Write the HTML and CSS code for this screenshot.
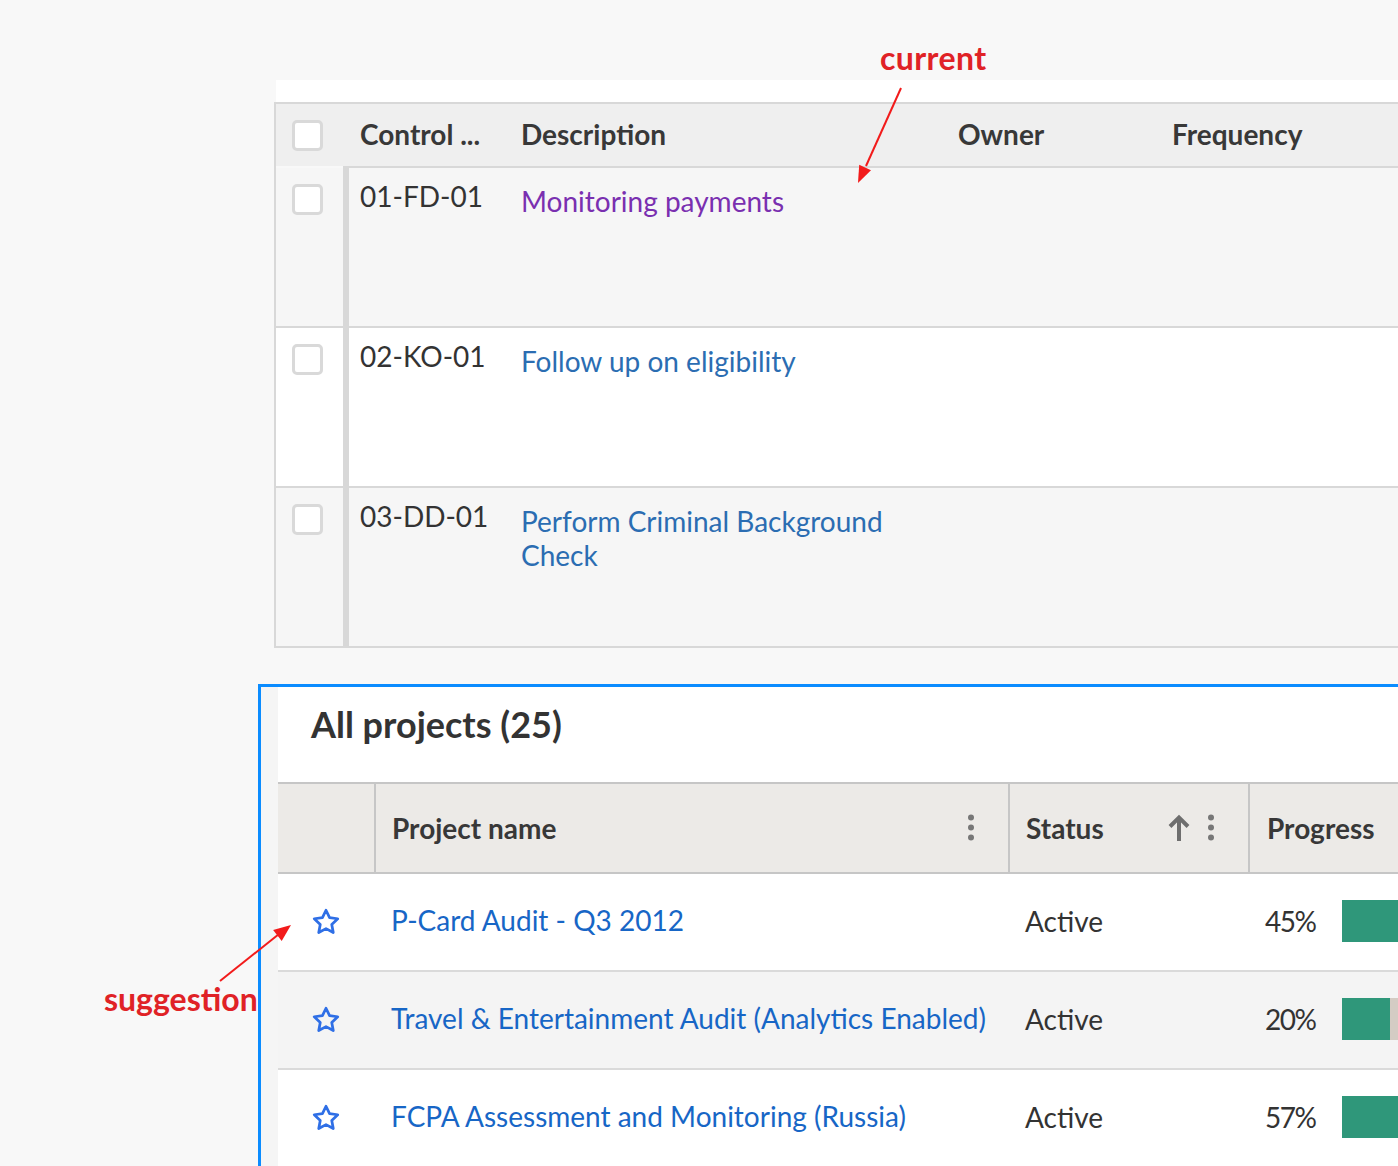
FILE: index.html
```html
<!DOCTYPE html>
<html lang="en">
<head>
<meta charset="utf-8">
<title>Controls and projects</title>
<link rel="stylesheet" href="styles.css">
</head>
<body>
<div class="page">
  <section class="controls">
    <div class="controls-top"></div>
    <div class="ctable">
      <div class="crow chead">
        <div class="cc cc-check"><span class="cb"></span></div>
        <div class="cc cc-id">Control ...</div>
        <div class="cc cc-desc">Description</div>
        <div class="cc cc-owner">Owner</div>
        <div class="cc cc-freq">Frequency</div>
      </div>
      <div class="crule"></div>
      <div class="cbody">
        <div class="crow alt">
          <div class="cc cc-check"><span class="cb"></span></div>
          <div class="cc cc-id">01-FD-01</div>
          <div class="cc cc-desc"><a class="clink visited" href="#">Monitoring payments</a></div>
          <div class="cc cc-owner"></div>
          <div class="cc cc-freq"></div>
        </div>
        <div class="crow">
          <div class="cc cc-check"><span class="cb"></span></div>
          <div class="cc cc-id">02-KO-01</div>
          <div class="cc cc-desc"><a class="clink" href="#">Follow up on eligibility</a></div>
          <div class="cc cc-owner"></div>
          <div class="cc cc-freq"></div>
        </div>
        <div class="crow alt">
          <div class="cc cc-check"><span class="cb"></span></div>
          <div class="cc cc-id">03-DD-01</div>
          <div class="cc cc-desc"><a class="clink" href="#">Perform Criminal Background Check</a></div>
          <div class="cc cc-owner"></div>
          <div class="cc cc-freq"></div>
        </div>
      </div>
    </div>
  </section>

  <section class="projects">
    <div class="pinner">
      <h2 class="ptitle">All projects (25)</h2>
      <div class="ptable">
        <div class="prow phead">
          <div class="pc pc-star"></div>
          <div class="pc pc-name"><span>Project name</span>
            <svg class="kebab" width="8" height="28" viewBox="0 0 8 28"><circle cx="4" cy="3.5" r="3"/><circle cx="4" cy="13.5" r="3"/><circle cx="4" cy="23.5" r="3"/></svg>
          </div>
          <div class="pc pc-status"><span>Status</span>
            <span class="hicons">
              <svg class="sortup" width="22" height="28" viewBox="0 0 22 28"><path d="M11 27V4M2 12.5L11 3.5l9 9"/></svg>
              <svg class="kebab" width="8" height="28" viewBox="0 0 8 28"><circle cx="4" cy="3.5" r="3"/><circle cx="4" cy="13.5" r="3"/><circle cx="4" cy="23.5" r="3"/></svg>
            </span>
          </div>
          <div class="pc pc-progress"><span>Progress</span></div>
        </div>
        <div class="pbody">
          <div class="prow">
            <div class="pc pc-star"><svg class="star" width="30" height="30" viewBox="0 0 24 24"><path d="M12 2.6l2.85 5.95 6.55.85-4.8 4.55 1.2 6.5L12 17.3l-5.8 3.150 1.2-6.5L2.6 9.4l6.55-.85z"/></svg></div>
            <div class="pc pc-name"><a class="plink" href="#">P-Card Audit - Q3 2012</a></div>
            <div class="pc pc-status"><span class="status">Active</span></div>
            <div class="pc pc-progress"><span class="pct">45%</span><span class="bar"><span class="fill" style="width:45%"></span></span></div>
          </div>
          <div class="prow alt">
            <div class="pc pc-star"><svg class="star" width="30" height="30" viewBox="0 0 24 24"><path d="M12 2.6l2.85 5.95 6.55.85-4.8 4.55 1.2 6.5L12 17.3l-5.8 3.15 1.2-6.5L2.6 9.4l6.55-.85z"/></svg></div>
            <div class="pc pc-name"><a class="plink" href="#">Travel &amp; Entertainment Audit (Analytics Enabled)</a></div>
            <div class="pc pc-status"><span class="status">Active</span></div>
            <div class="pc pc-progress"><span class="pct">20%</span><span class="bar"><span class="fill" style="width:20%"></span></span></div>
          </div>
          <div class="prow">
            <div class="pc pc-star"><svg class="star" width="30" height="30" viewBox="0 0 24 24"><path d="M12 2.6l2.85 5.95 6.55.85-4.8 4.55 1.2 6.5L12 17.3l-5.8 3.15 1.2-6.5L2.6 9.4l6.55-.85z"/></svg></div>
            <div class="pc pc-name"><a class="plink" href="#">FCPA Assessment and Monitoring (Russia)</a></div>
            <div class="pc pc-status"><span class="status">Active</span></div>
            <div class="pc pc-progress"><span class="pct">57%</span><span class="bar"><span class="fill" style="width:57%"></span></span></div>
          </div>
        </div>
      </div>
    </div>
  </section>
</div>

<svg class="annot" width="1398" height="1166" viewBox="0 0 1398 1166">
  <line x1="901" y1="88" x2="866" y2="166"/>
  <polygon points="858,183 859.2,164.8 871,170.2"/>
  <line x1="220" y1="981" x2="279" y2="934"/>
  <polygon points="291,925 273.1,930.1 281.7,941.1"/>
</svg>
<div class="note note-current">current</div>
<div class="note note-suggestion">suggestion</div>
</body>
</html>
```

FILE: styles.css
```css
html, body {
  margin: 0;
  padding: 0;
  overflow: hidden;
}
body {
  width: 1398px;
  height: 1166px;
  position: relative;
  background: #f8f8f8;
  font-family: Lato, "Noto Sans", "Liberation Sans", sans-serif;
  color: #333333;
}
.page {
  padding-top: 80px;
}

/* ---------- Controls table (current) ---------- */
.controls {
  margin-left: 274px;
  width: 1300px;
}
.controls-top {
  margin-left: 2px;
  height: 22px;
  background: #ffffff;
}
.ctable {
  border-top: 2px solid #d8d8d8;
  border-left: 2px solid #d8d8d8;
  border-bottom: 2px solid #d8d8d8;
}
.crow {
  display: grid;
  grid-template-columns: 67px 178px 437px 214px 1fr;
}
.cc {
  box-sizing: border-box;
  font-size: 28px;
  line-height: 34px;
}
.chead {
  height: 62px;
  background: #efefef;
  align-items: center;
}
.chead .cc {
  font-weight: 700;
  color: #383838;
  padding-bottom: 3px;
}
.chead .cc-check {
  padding-bottom: 0;
}
.cc-check {
  padding-left: 16px;
  display: flex;
}
.cc-id {
  padding-left: 17px;
}
.cc-desc {
  padding-left: 0;
}
.crule {
  height: 2px;
  margin-left: 67px;
  background: #d8d8d8;
}
.cbody .crow {
  height: 158px;
  background: #ffffff;
}
.cbody .crow.alt {
  background: #f6f6f6;
}
.cbody .crow:not(:last-child) {
  border-bottom: 2px solid #d8d8d8;
}
.cbody .cc-check {
  padding-top: 16px;
  align-items: flex-start;
}
.cbody .cc-id {
  border-left: 6px solid #d8d8d8;
  padding-left: 11px;
  padding-top: 11px;
}
.cbody .cc-desc {
  padding-top: 16px;
  padding-right: 40px;
}
.cb {
  display: block;
  width: 31px;
  height: 31px;
  box-sizing: border-box;
  border: 3px solid #d9d9d9;
  border-radius: 5px;
  background: #ffffff;
}
.clink {
  color: #2b6db2;
  text-decoration: none;
}
.clink.visited {
  color: #7a2fb0;
}

/* ---------- Projects table (suggestion) ---------- */
.projects {
  margin: 36px 0 0 258px;
  width: 1300px;
  height: 500px;
  border-top: 3px solid #0b8cff;
  border-left: 3px solid #0b8cff;
  padding-left: 17px;
  background: #f5f5f5;
}
.pinner {
  background: #ffffff;
  height: 100%;
}
.ptitle {
  margin: 0;
  height: 95px;
  box-sizing: border-box;
  padding: 17px 0 0 33px;
  font-size: 36px;
  line-height: 40px;
  font-weight: 700;
  color: #333333;
}
.prow {
  display: grid;
  grid-template-columns: 96px 634px 240px 1fr;
  align-items: stretch;
}
.pc {
  box-sizing: border-box;
  display: flex;
  align-items: center;
  font-size: 28px;
  line-height: 34px;
}
.phead {
  height: 92px;
  background: #eceae7;
  border-top: 2px solid #c6c6c6;
  border-bottom: 2px solid #c6c6c6;
  box-sizing: border-box;
}
.phead .pc {
  font-weight: 700;
  color: #383838;
  justify-content: space-between;
}
.phead .pc + .pc {
  border-left: 2px solid #c6c6c6;
}
.phead .pc-name {
  padding: 0 33px 0 16px;
}
.phead .pc-status {
  padding: 0 33px 0 16px;
}
.phead .pc-progress {
  padding-left: 17px;
}
.hicons {
  display: flex;
  align-items: center;
  gap: 17px;
}
.kebab {
  display: block;
  fill: #777777;
}
.sortup {
  display: block;
  fill: none;
  stroke: #6e6e6e;
  stroke-width: 4;
}
.pbody .prow {
  height: 98px;
  box-sizing: border-box;
  background: #ffffff;
  border-bottom: 2px solid #dadada;
}
.pbody .prow.alt {
  background: #f4f4f4;
}
.pbody .pc {
  padding-bottom: 2px;
}
.pbody .pc-star {
  justify-content: center;
  padding-bottom: 0;
}
.pbody .pc-name {
  padding-left: 17px;
  padding-bottom: 4px;
}
.pbody .pc-status {
  padding-left: 17px;
}
.pbody .pc-progress {
  padding-left: 17px;
}
.star {
  display: block;
  fill: none;
  stroke: #2f6fe6;
  stroke-width: 2.2;
  stroke-linejoin: round;
}
.plink {
  color: #1766c6;
  text-decoration: none;
}
.status {
  color: #333333;
}
.pct {
  width: 77px;
  color: #333333;
  letter-spacing: -1.5px;
}
.bar {
  display: block;
  width: 240px;
  height: 42px;
  background: #d4ccc4;
}
.fill {
  display: block;
  height: 100%;
  background: #2f977a;
}

/* ---------- Annotations ---------- */
.annot {
  position: absolute;
  left: 0;
  top: 0;
  pointer-events: none;
}
.annot line {
  stroke: #f21b1b;
  stroke-width: 2;
}
.annot polygon {
  fill: #f21b1b;
}
.note {
  position: absolute;
  font-size: 32px;
  line-height: 1;
  font-weight: 700;
  color: #e02226;
  white-space: nowrap;
}
.note-current {
  left: 880px;
  top: 42px;
  letter-spacing: 0.4px;
}
.note-suggestion {
  left: 104px;
  top: 983px;
}
```
